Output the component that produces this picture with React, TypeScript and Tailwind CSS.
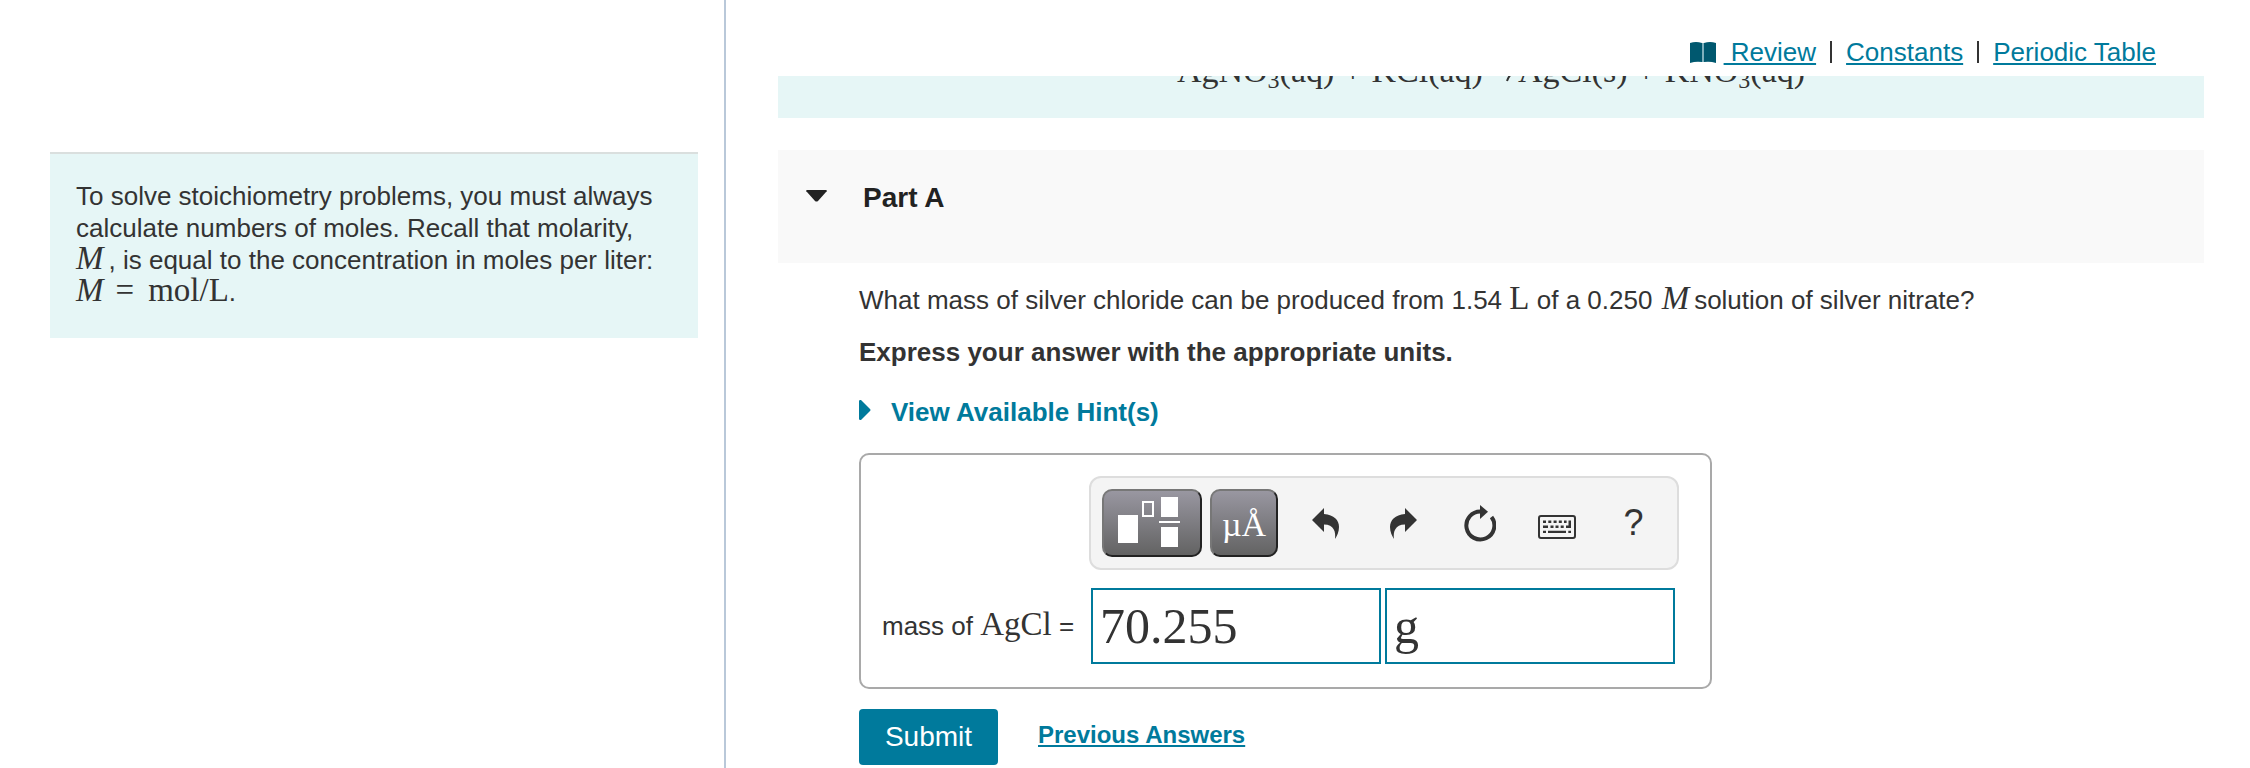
import { useState } from 'react';

interface ToolButtonProps {
  label: string;
  children: React.ReactNode;
}

const ToolButton: React.FC<ToolButtonProps> = ({ label, children }) => (
  <button
    aria-label={label}
    className="w-[77px] h-full flex items-center justify-center text-[#333]"
  >
    {children}
  </button>
);

const Separator = () => <span className="w-[2px] h-[22px] bg-[#333]" />;

const MathText: React.FC<{ children: React.ReactNode }> = ({ children }) => (
  <span className="font-['Liberation_Serif',serif] text-[33px] leading-[20px]">
    {children}
  </span>
);

const Sidebar = () => (
  <aside className="w-[726px] shrink-0 border-r-2 border-[#b9c8d9] pl-[50px] pr-[26px] pt-[152px]">
    <div className="bg-[#e6f6f6] border-t-2 border-[#dadfde] px-[26px] pt-[26px] pb-[30px] text-[26px] leading-[32px]">
      <p>
        To solve stoichiometry problems, you must always
        <br />
        calculate numbers of moles. Recall that molarity,
        <br />
        <MathText>
          <i className="mr-[5px]">M</i>
        </MathText>
        , is equal to the concentration in moles per liter:
        <br />
        <MathText>
          <i className="mr-3">M</i>=<span className="ml-[14px]">mol/L</span>
        </MathText>
        .
      </p>
    </div>
  </aside>
);

const Header = () => (
  <header className="h-[76px] pt-[32px] pr-[48px] flex items-start justify-end text-[26px] leading-[40px] text-[#007a9c]">
    <nav className="flex items-center gap-[14px]">
      <a href="#review" className="flex items-center gap-2">
        <svg width="26" height="21" viewBox="0 0 26 21" aria-hidden="true">
          <path
            d="M0 1Q6-1 12 1V20Q6 19 0 21ZM14 1Q20-1 26 1V21Q20 19 14 20Z"
            fill="#00586f"
          />
          <path d="M12 1h2v19h-2z" fill="#7fb0bd" />
        </svg>
        <span className="underline underline-offset-2 decoration-2 whitespace-pre">
          {' Review'}
        </span>
      </a>
      <Separator />
      <a
        href="#constants"
        className="underline underline-offset-2 decoration-2"
      >
        Constants
      </a>
      <Separator />
      <a href="#periodic" className="underline underline-offset-2 decoration-2">
        Periodic Table
      </a>
    </nav>
  </header>
);

const Equation = () => (
  <div className="h-[42px] bg-[#e6f6f6] overflow-hidden flex items-end justify-center pb-[27px] font-['Liberation_Serif',serif] text-[34px] leading-[40px]">
    <p className="shrink-0 flex items-baseline gap-[9px]">
      <span>
        AgNO<sub className="text-2xl leading-none">3</sub>(aq)
      </span>
      <span>+</span>
      <span>KCl(aq)</span>
      <span className="flex items-baseline gap-1">
        <svg
          width="22"
          height="20"
          viewBox="0 0 22 20"
          fill="none"
          stroke="#333"
          strokeWidth="2"
          role="img"
          aria-label="yields"
        >
          <path d="M0 11H21M15 3Q17 9 21 11Q17 13 15 19" />
        </svg>
        AgCl(s)
      </span>
      <span>+</span>
      <span>
        KNO<sub className="text-2xl leading-none">3</sub>(aq)
      </span>
    </p>
  </div>
);

const Toolbar = () => (
  <div className="h-[94px] w-[590px] -ml-[2px] rounded-xl border-2 border-[#ddd] bg-[#f4f4f4] flex items-center pl-[11px]">
    <button
      aria-label="Templates"
      className="w-[100px] h-[68px] rounded-[10px] border-2 border-t-[#777] border-l-[#777] border-r-[#222] border-b-[#222] bg-linear-to-b from-[#9997a1] to-[#636363] flex items-center pl-[14px] pb-[2px]"
    >
      <svg width="62" height="50" viewBox="0 0 62 50" fill="#fff">
        <path d="M0 18h20v28H0z" />
        <path d="M25 5h10v14H25z" fill="none" stroke="#fff" strokeWidth="2" />
        <path d="M43 0h17v20H43zM41 24h21v2H41zM43 30h17v20H43z" />
      </svg>
    </button>
    <button
      aria-label="Symbols"
      className="ml-2 w-[68px] h-[68px] rounded-[10px] border-2 border-t-[#777] border-l-[#777] border-r-[#222] border-b-[#222] bg-linear-to-b from-[#9997a1] to-[#636363] pt-1 text-white font-['Liberation_Serif',serif] text-[34px] leading-none"
    >
      µÅ
    </button>
    <div className="ml-[9px] h-full flex">
      <ToolButton label="Undo">
        <svg width="28" height="31" viewBox="0 0 28 31" fill="currentColor">
          <path d="M0 12 12 0V6C22 7 27 12 27 19C27 24 25 28 23 31C24 24 22 16.500 12 16.500V24Z" />
        </svg>
      </ToolButton>
      <ToolButton label="Redo">
        <svg width="28" height="31" viewBox="0 0 28 31" fill="currentColor">
          <path d="M28 12 16 0V6C6 7 1 12 1 19C1 24 3 28 5 31C4 24 6 16.500 16 16.500V24Z" />
        </svg>
      </ToolButton>
      <ToolButton label="Reset">
        <svg width="32" height="37" viewBox="0 0 32 37" fill="none">
          <path
            d="M27.500 12A14 14 0 1 1 17 6.500"
            stroke="currentColor"
            strokeWidth="4"
          />
          <path d="M16 0 24 6.700 16 14Z" fill="currentColor" />
        </svg>
      </ToolButton>
      <ToolButton label="Keyboard shortcuts">
        <svg
          className="mt-2"
          width="38"
          height="24"
          viewBox="0 0 38 24"
          fill="currentColor"
        >
          <rect
            x="1"
            y="1"
            width="36"
            height="22"
            rx="2"
            fill="none"
            stroke="currentColor"
            strokeWidth="2"
          />
          <path d="M5 5.500h3v2.500H5zM10.300 5.500h3v2.500h-3zM15.600 5.500h3v2.500h-3zM20.800 5.500h3v2.500h-3zM26 5.500h2.600v2.500H26zM30.500 5.500H33V13h-5v-2.500h2.500zM5 10.500h5V13H5zM12.500 10.500h3V13h-3zM17.500 10.500h3V13h-3zM22.700 10.500h3V13h-3zM5 15.700h3V18H5zM10 15.700h18V18H10zM30.300 15.700H33V18h-2.700z" />
        </svg>
      </ToolButton>
      <ToolButton label="Help">
        <span className="text-[36px] leading-none">?</span>
      </ToolButton>
    </div>
  </div>
);

const AnswerBox = () => {
  const [value, setValue] = useState('70.255');
  const [units, setUnits] = useState('g');

  return (
    <div className="w-[853px] max-w-full rounded-[10px] border-2 border-[#a9a9a9] pl-[21px] pr-[34px] pt-[21px] pb-[23px] grid grid-cols-[209px_1fr] gap-y-[18px]">
      <div className="col-start-2">
        <Toolbar />
      </div>
      <label
        htmlFor="value"
        className="self-center text-[26px] leading-[32px] whitespace-nowrap"
      >
        mass of <MathText>AgCl</MathText> =
      </label>
      <div className="flex gap-1">
        <input
          id="value"
          value={value}
          onChange={(e) => setValue(e.target.value)}
          className="w-[290px] h-[76px] border-2 border-[#007a9c] px-[7px] font-['Liberation_Serif',serif] text-[50px]"
        />
        <input
          aria-label="Units"
          value={units}
          onChange={(e) => setUnits(e.target.value)}
          className="w-[290px] h-[76px] border-2 border-[#007a9c] px-[7px] font-['Liberation_Serif',serif] text-[50px]"
        />
      </div>
    </div>
  );
};

export default function App() {
  return (
    <div className="min-h-screen flex bg-white text-[#333] font-['Liberation_Sans',Arial,sans-serif]">
      <Sidebar />
      <main className="flex-1 min-w-0 pl-[52px] pr-[46px]">
        <Header />
        <Equation />
        <section>
          <h2 className="mt-8 h-[113px] bg-[#f9f9f9] pt-8 pl-7 text-[28px] leading-[32px] font-bold text-[#222]">
            <button className="flex items-center gap-[36px]">
              <svg className="mb-1" width="21" height="12" viewBox="0 0 21 12">
                <path
                  d="M1 0H20Q22 1 20 2L12 11Q10.500 12 9 11L1 2Q-1 1 1 0Z"
                  fill="#222"
                />
              </svg>
              Part A
            </button>
          </h2>
          <div className="pl-[81px] text-[26px] leading-[32px]">
            <p className="mt-[21px]">
              What mass of silver chloride can be produced from 1.54{' '}
              <MathText>L</MathText> of a 0.250{' '}
              <MathText>
                <i className="ml-[2px] mr-[5px]">M</i>
              </MathText>
              solution of silver nitrate?
            </p>
            <p className="mt-5 font-bold">
              Express your answer with the appropriate units.
            </p>
            <button className="mt-7 flex items-center gap-5 font-bold text-[#007a9c]">
              <svg className="mb-1" width="12" height="20" viewBox="0 0 12 20">
                <path
                  d="M0 1Q1-1 2 0L11 9Q12 10 11 11L2 20Q1 21 0 19Z"
                  fill="#007a9c"
                />
              </svg>
              View Available Hint(s)
            </button>
            <div className="mt-[25px]">
              <AnswerBox />
            </div>
            <div className="mt-5 flex items-center gap-10">
              <button className="h-[56px] w-[139px] rounded bg-[#007a9c] text-white text-[28px]">
                Submit
              </button>
              <a
                href="#previous"
                className="pb-1 text-2xl font-bold text-[#007a9c] underline underline-offset-2 decoration-2"
              >
                Previous Answers
              </a>
            </div>
          </div>
        </section>
      </main>
    </div>
  );
}
